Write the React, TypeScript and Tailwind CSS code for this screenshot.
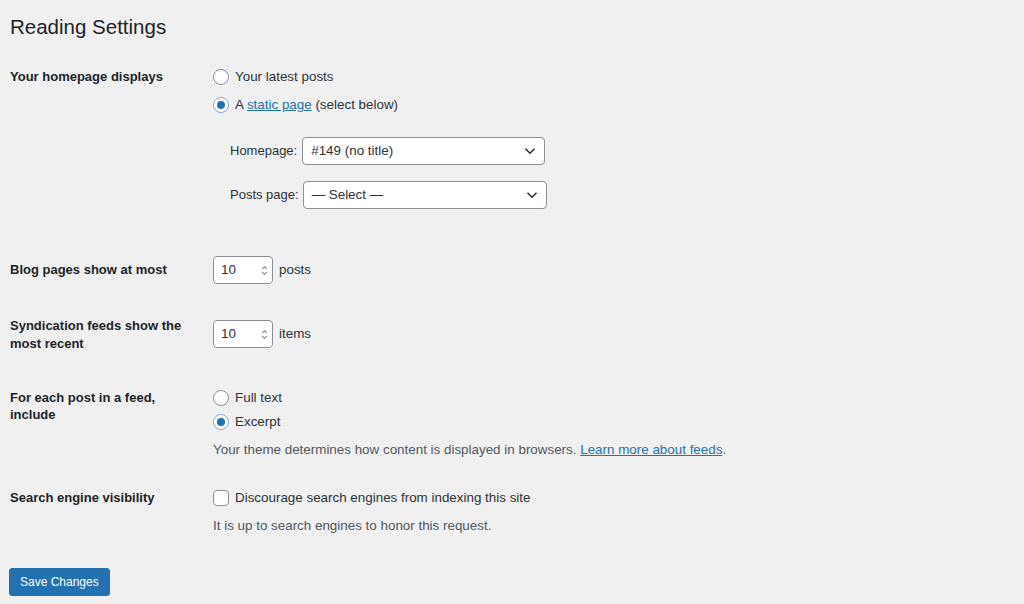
import React from 'react'

const font = { fontFamily: '"Liberation Sans", Arial, sans-serif' }

function Radio({ checked, label }: { checked?: boolean; label: React.ReactNode }) {
  return (
    <label className="flex items-center h-[20px] gap-[6px] text-[13.4px] text-[#2c3338]">
      <span
        className={`w-[16px] h-[16px] rounded-full border bg-white flex items-center justify-center shrink-0 ${
          checked ? 'border-[#8aa6c6]' : 'border-[#8c8f94]'
        }`}
      >
        {checked && <span className="w-[8px] h-[8px] rounded-full bg-[#2271b1]" />}
      </span>
      <span>{label}</span>
    </label>
  )
}

function Select({ value, w }: { value: string; w: string }) {
  return (
    <div
      className={`${w} h-[28px] bg-white border border-[#8c8f94] rounded-[4px] flex items-center justify-between pl-[8px] pr-[8px] text-[13.4px] text-[#2c3338]`}
    >
      <span>{value}</span>
      <svg width="12" height="8" viewBox="0 0 12 8" fill="none">
        <path d="M1.5 1.8 6 6.2l4.5-4.4" stroke="#2c3338" strokeWidth="1.6" />
      </svg>
    </div>
  )
}

function NumberInput({ value }: { value: string }) {
  return (
    <div className="w-[60px] h-[28px] bg-white border border-[#8c8f94] rounded-[4px] flex items-center justify-between pl-[7px] pr-[4px] text-[13.4px] text-[#2c3338]">
      <span>{value}</span>
      <svg width="7" height="11" viewBox="0 0 7 11" fill="none">
        <path d="M1.2 4 3.5 1.6 5.8 4M1.2 7 3.5 9.4 5.8 7" stroke="#8c8f94" strokeWidth="1.1" />
      </svg>
    </div>
  )
}

function Row({ label, className, children }: { label: React.ReactNode; className?: string; children: React.ReactNode }) {
  return (
    <div className={`flex ${className ?? ''}`}>
      <div className="w-[203px] shrink-0 text-[13px] font-bold leading-[18px] text-[#1d2327]">{label}</div>
      <div className="flex-1">{children}</div>
    </div>
  )
}

export default function App() {
  return (
    <div style={font} className="w-[1024px] h-[604px] bg-[#f0f0f1] px-[10px] overflow-hidden text-[#1d2327]">
      <h1 className="pt-[12px] text-[20.5px] leading-[29px] font-normal text-[#1d2327]">Reading Settings</h1>

      {/* homepage displays */}
      <Row label={<div className="pt-[1px]">Your homepage displays</div>} className="mt-[26px]">
        <div className="flex flex-col gap-[8px]">
          <Radio label="Your latest posts" />
          <Radio
            checked
            label={
              <>
                A <span className="text-[#2271b1] underline">static page</span> (select below)
              </>
            }
          />
        </div>
        <div className="pl-[17px] mt-[22px] flex flex-col gap-[16px] text-[13px] text-[#2c3338]">
          <div className="flex items-center gap-[5px]">
            <span>Homepage:</span>
            <Select value="#149 (no title)" w="w-[243px]" />
          </div>
          <div className="flex items-center gap-[4px]">
            <span>Posts page:</span>
            <Select value="— Select —" w="w-[244px]" />
          </div>
        </div>
      </Row>

      {/* blog pages */}
      <Row label={<div className="pt-[5px]">Blog pages show at most</div>} className="mt-[47px]">
        <div className="flex items-center gap-[6px] text-[13.4px] text-[#2c3338]">
          <NumberInput value="10" />
          <span>posts</span>
        </div>
      </Row>

      {/* syndication */}
      <Row
        label={
          <div className="-mt-[3px]">
            Syndication feeds show the
            <br />
            most recent
          </div>
        }
        className="mt-[36px]"
      >
        <div className="flex items-center gap-[6px] text-[13.4px] text-[#2c3338]">
          <NumberInput value="10" />
          <span>items</span>
        </div>
      </Row>

      {/* feed content */}
      <Row
        label={
          <div className="pt-[1px] leading-[17px]">
            For each post in a feed,
            <br />
            include
          </div>
        }
        className="mt-[35px]"
      >
        <div className="flex flex-col gap-[4px]">
          <Radio label="Full text" />
          <Radio checked label="Excerpt" />
        </div>
        <p className="mt-[8px] text-[13.4px] leading-[20px] text-[#50575e]">
          Your theme determines how content is displayed in browsers.{' '}
          <span className="text-[#2271b1] underline">Learn more about feeds</span>.
        </p>
      </Row>

      {/* search engine */}
      <Row label={<div className="pt-[1px]">Search engine visibility</div>} className="mt-[28px]">
        <label className="flex items-center h-[20px] gap-[6px] text-[13.4px] text-[#2c3338]">
          <span className="w-[16px] h-[16px] rounded-[4px] border border-[#8c8f94] bg-white shrink-0" />
          <span>Discourage search engines from indexing this site</span>
        </label>
        <p className="mt-[8px] text-[13.4px] leading-[20px] text-[#50575e]">It is up to search engines to honor this request.</p>
      </Row>

      <button className="mt-[32px] -ml-[1px] h-[28px] px-[10px] bg-[#2271b1] border border-[#2271b1] rounded-[3px] text-white text-[12px] leading-[26px]">
        Save Changes
      </button>
    </div>
  )
}
